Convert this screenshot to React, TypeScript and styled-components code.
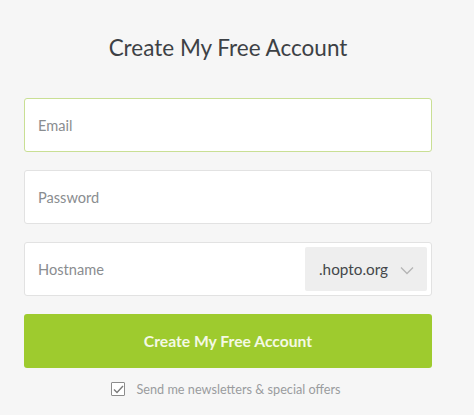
import React, { useState } from 'react';
import styled, { createGlobalStyle } from 'styled-components';

const GlobalStyle = createGlobalStyle`
  html, body {
    margin: 0;
    padding: 0;
    background: #f6f6f6;
    font-family: Lato, 'Open Sans', sans-serif;
  }
  * {
    box-sizing: border-box;
  }
`;

const App: React.FC = () => {
  const [domain] = useState('.hopto.org');
  const [newsletter, setNewsletter] = useState(true);

  return (
    <Page>
      <GlobalStyle />
      <Title>Create My Free Account</Title>
      <Form onSubmit={(e) => e.preventDefault()}>
        <Field highlighted>
          <TextInput type="email" placeholder="Email" />
        </Field>
        <Field>
          <TextInput type="password" placeholder="Password" />
        </Field>
        <Field>
          <TextInput type="text" placeholder="Hostname" />
          <DomainSelect type="button">
            {domain}
            <Chevron width="14" height="9" viewBox="0 0 14 9">
              <path d="M1 1.5 L7 7.5 L13 1.5" fill="none" stroke="#b5b5b5" strokeWidth="1.3" />
            </Chevron>
          </DomainSelect>
        </Field>
        <SubmitButton type="submit">Create My Free Account</SubmitButton>
        <CheckRow>
          <CheckBox type="button" onClick={() => setNewsletter(!newsletter)}>
            {newsletter && (
              <svg width="11" height="9" viewBox="0 0 11 9">
                <path d="M1 4.5 L4 7.5 L10 1" fill="none" stroke="#7a7a7a" strokeWidth="1.4" />
              </svg>
            )}
          </CheckBox>
          <CheckLabel>Send me newsletters &amp; special offers</CheckLabel>
        </CheckRow>
      </Form>
    </Page>
  );
};

const Page = styled.div`
  width: 474px;
  height: 415px;
  padding: 33px 42px 0 24px;
  overflow: hidden;
`;

const Title = styled.h1`
  margin: 0 0 35px 0;
  height: 30px;
  line-height: 30px;
  text-align: center;
  font-family: Lato, sans-serif;
  font-size: 22.5px;
  font-weight: 400;
  color: #3d4145;
`;

const Form = styled.form`
  display: grid;
  gap: 18px;
`;

const Field = styled.div<{ highlighted?: boolean }>`
  display: flex;
  align-items: center;
  height: 54px;
  padding: 4px;
  background: #fff;
  border: 1px solid ${({ highlighted }) => (highlighted ? '#c9df94' : '#e2e2e2')};
  border-radius: 3px;
`;

const TextInput = styled.input`
  flex: 1;
  min-width: 0;
  height: 100%;
  padding: 0 9px;
  border: none;
  outline: none;
  background: transparent;
  font-family: Lato, sans-serif;
  font-size: 14.6px;
  color: #333;

  &::placeholder {
    color: #8a8d90;
  }
`;

const DomainSelect = styled.button`
  display: flex;
  align-items: center;
  gap: 12px;
  width: 122px;
  height: 44px;
  padding: 0 0 0 14px;
  border: none;
  border-radius: 2px;
  background: #eeeeee;
  font-family: Lato, sans-serif;
  font-size: 15.3px;
  color: #44474a;
  cursor: pointer;
`;

const Chevron = styled.svg`
  margin-top: 3px;
`;

const SubmitButton = styled.button`
  height: 54px;
  border: none;
  border-radius: 3px;
  background: #9ecb2e;
  color: #f4f9e4;
  font-family: Lato, sans-serif;
  font-size: 15.7px;
  font-weight: 700;
  cursor: pointer;
`;

const CheckRow = styled.div`
  display: flex;
  align-items: center;
  justify-content: center;
  gap: 11px;
  margin-top: -5px;
  padding-right: 4px;
`;

const CheckBox = styled.button`
  display: flex;
  align-items: center;
  justify-content: center;
  width: 14px;
  height: 14px;
  flex-shrink: 0;
  padding: 0;
  border: 1px solid #8c8c8c;
  border-radius: 1px;
  background: #fff;
  cursor: pointer;
`;

const CheckLabel = styled.span`
  font-family: Lato, sans-serif;
  font-size: 12.7px;
  color: #9a9c9e;
`;

export default App;
